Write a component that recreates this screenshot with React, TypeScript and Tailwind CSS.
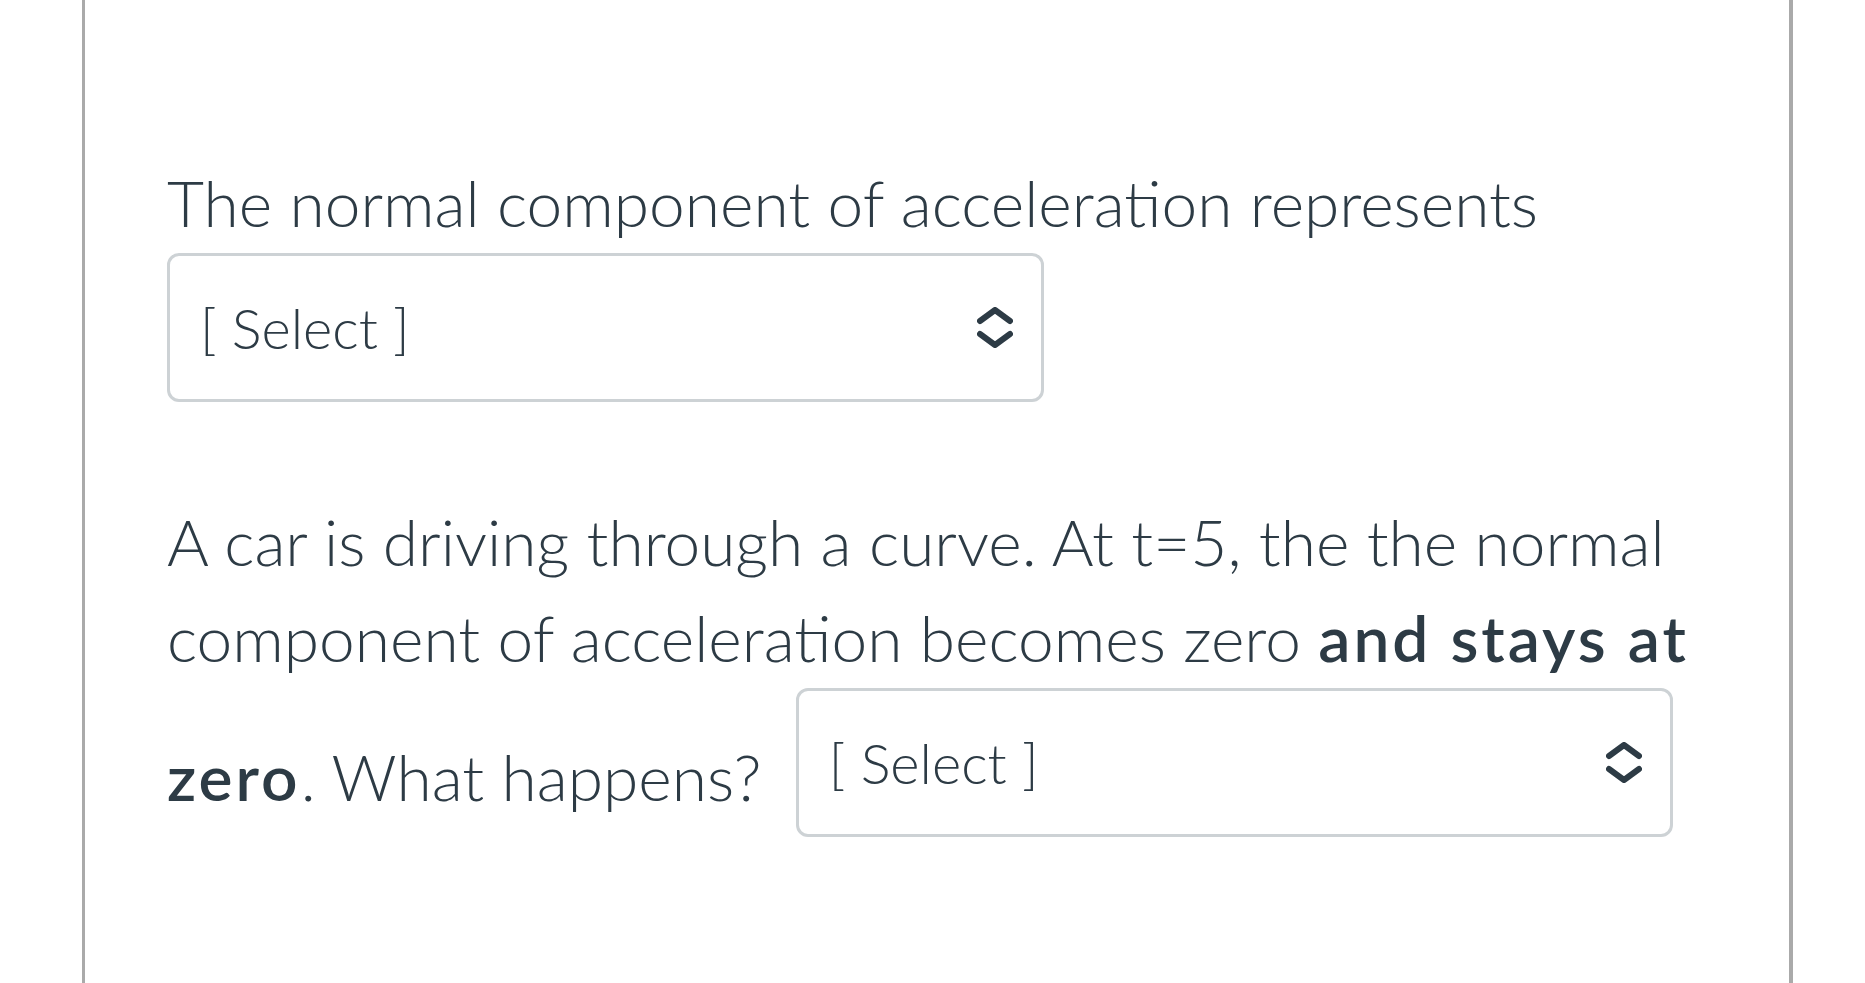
import React from "react";

const SelectBox: React.FC<{ className?: string }> = ({ className = "" }) => (
  <span
    className={`inline-flex items-center justify-between w-[877px] h-[149px] border-[3px] border-[#cdd2d5] rounded-[12px] bg-white pl-[30px] pr-[28px] align-middle text-[56px] leading-none text-[#2d3b45] font-light tracking-normal ${className}`}
  >
    <span>[ Select ]</span>
    <svg width="36" height="42" viewBox="0 0 36 42" fill="none" aria-hidden="true">
      <path d="M3 14 L18 3 L33 14" stroke="#2d3b45" strokeWidth="6" strokeLinecap="round" strokeLinejoin="round" />
      <path d="M3 27 L18 38 L33 27" stroke="#2d3b45" strokeWidth="6" strokeLinecap="round" strokeLinejoin="round" />
    </svg>
  </span>
);

export default function App() {
  return (
    <div className="w-full h-[983px] bg-white overflow-hidden font-['Lato','Noto_Sans',sans-serif] font-light text-[#2d3b45]">
      <div className="ml-[82px] w-[1711px] h-[983px] border-l-[3px] border-r-[4px] border-[#aaaaaa] pl-[82px] pr-[81px] pt-[155px]">
        <p className="text-[64px] leading-[96px] mb-[51px]">
          The normal component of acceleration represents{" "}
          <SelectBox className="mt-[2px] mb-[41px]" />
        </p>
        <p className="text-[64px] leading-[96px]">
          A car is driving through a curve. At t=5, the the normal component of acceleration becomes zero{" "}
          <strong className="font-semibold tracking-[3px]">and stays at zero</strong>. What happens?{" "}
          <SelectBox className="ml-[17px] mt-[2px] mb-[48px]" />
        </p>
      </div>
    </div>
  );
}
